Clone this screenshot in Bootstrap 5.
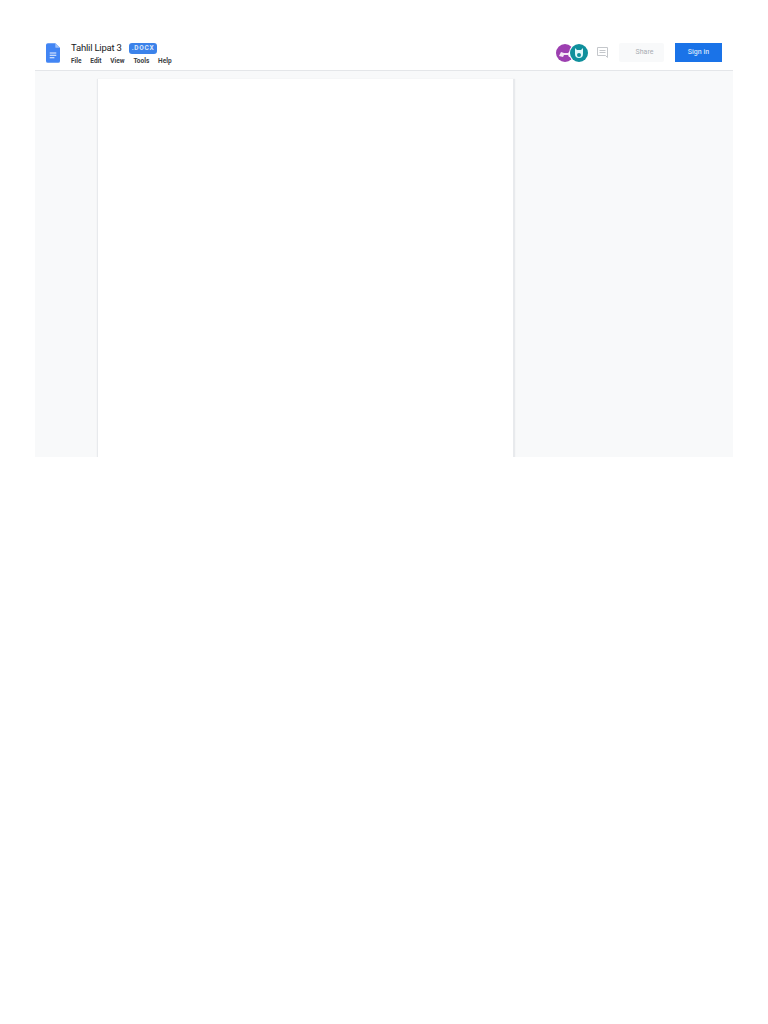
<!DOCTYPE html>
<html lang="en">
<head>
    <meta charset="UTF-8">
    <meta name="viewport" content="width=device-width, initial-scale=1.0">
    <title>Tahlil Lipat 3</title>
    <link href="https://cdn.jsdelivr.net/npm/bootstrap@5.3.0/dist/css/bootstrap.min.css" rel="stylesheet">
    <style>
        body { background: #fff; font-family: Roboto, "Liberation Sans", sans-serif; }
        .doc-shell { width: 698px; margin: 35px 0 0 35px; }
        .doc-header { height: 36px; padding: 7px 11px 0 11px; border-bottom: 1px solid #e4e6e9; }
        .doc-logo { margin: 1px 0 0 0; }
        .doc-text { margin-left: 11px; }
        .doc-title { width: 58px; font-size: 9.500px; line-height: 12px; font-weight: 400; color: #202124; letter-spacing: -0.2px; }
        .docx-tag { background: #3b82ea; color: #dbe7fb; font-size: 6.5px; font-weight: 700; letter-spacing: .7px; line-height: 11px; height: 11px; width: 28px; border-radius: 3px; text-align: center; }
        .doc-menu { font-size: 6.5px; font-weight: 700; line-height: 8px; color: #3c4043; margin-top: 3px; }
        .doc-menu span { margin-right: 8.800px; }
        .avatar-stack { width: 32px; height: 20px; position: relative; top: 1px; }
        .avatar-stack svg { position: absolute; top: 1px; }
        .comment-glyph { margin-left: 9px; }
        .share-btn { width: 45px; height: 19px; margin-left: 11px; background: #f8f9fa; color: #a8acb2; font-size: 7px; line-height: 19px; text-align: center; border-radius: 2px; padding-left: 6px; }
        .signin-btn { width: 47px; height: 19px; margin-left: 11px; background: #1a73e8; color: #d2e3fc; font-size: 7px; font-weight: 500; line-height: 18px; text-align: center; }
        .doc-canvas { height: 386px; background: #f8f9fa; padding: 8px 0 0 62px; }
        .doc-page { width: 418px; height: 378px; background: #fff; border: solid #e8eaed; border-width: 0 2px 0 1px; box-shadow: 0 0 1px rgba(60, 64, 67, .1); }
    </style>
</head>
<body>
    <div class="doc-shell">
        <div class="doc-header d-flex align-items-start">
            <svg width="14" height="20" viewBox="0 0 15 21" class="doc-logo flex-shrink-0" aria-hidden="true">
                <path d="M2 0h8l5 5v14a2 2 0 0 1-2 2H2a2 2 0 0 1-2-2V2a2 2 0 0 1 2-2z" fill="#4285f4"/>
                <path d="M10 0l5 5h-4a1 1 0 0 1-1-1z" fill="#a1c2fa"/>
                <path d="M4 10h7v1H4zM4 12.500h7v1H4zM4 15h5v1H4z" fill="#f1f6fe"/>
            </svg>
            <div class="doc-text">
                <div class="d-flex align-items-center">
                    <span class="doc-title">Tahlil Lipat 3</span>
                    <span class="docx-tag">.DOCX</span>
                </div>
                <div class="doc-menu d-flex">
                    <span>File</span><span>Edit</span><span>View</span><span>Tools</span><span>Help</span>
                </div>
            </div>
            <div class="ms-auto d-flex align-items-center">
                <div class="avatar-stack">
                    <svg width="18" height="18" viewBox="0 0 18 18" style="left:0" aria-hidden="true">
                        <circle cx="9" cy="9" r="9" fill="#9c3fb0"/>
                        <path d="M3 12l2-4 3 1h4l2-2 2 1v5h-3l-1-2H8l-1 2z" fill="#f3e5f5"/>
                    </svg>
                    <svg width="20" height="20" viewBox="0 0 20 20" style="left:13px;top:0" aria-hidden="true">
                        <circle cx="10" cy="10" r="10" fill="#fff"/>
                        <circle cx="10" cy="10" r="9" fill="#0f8f9c"/>
                        <path d="M6 5l2 2h4l2-2v6a4 4 0 0 1-8 0z" fill="#e0f7fa"/>
                        <circle cx="10" cy="12" r="2" fill="#0f8f9c"/>
                    </svg>
                </div>
                <svg width="11" height="11" viewBox="0 0 11 11" class="comment-glyph" aria-hidden="true">
                    <path d="M.5.500h10v10l-2-2H.5z" fill="none" stroke="#c4c7cb"/>
                    <path d="M2.500 3h6v1h-6zM2.500 5h6v1h-6z" fill="#c4c7cb"/>
                </svg>
                <div class="share-btn">Share</div>
                <div class="signin-btn">Sign in</div>
            </div>
        </div>
        <div class="doc-canvas">
            <div class="doc-page"></div>
        </div>
    </div>

    <script src="https://cdn.jsdelivr.net/npm/bootstrap@5.3.0/dist/js/bootstrap.bundle.min.js"></script>
</body>
</html>
